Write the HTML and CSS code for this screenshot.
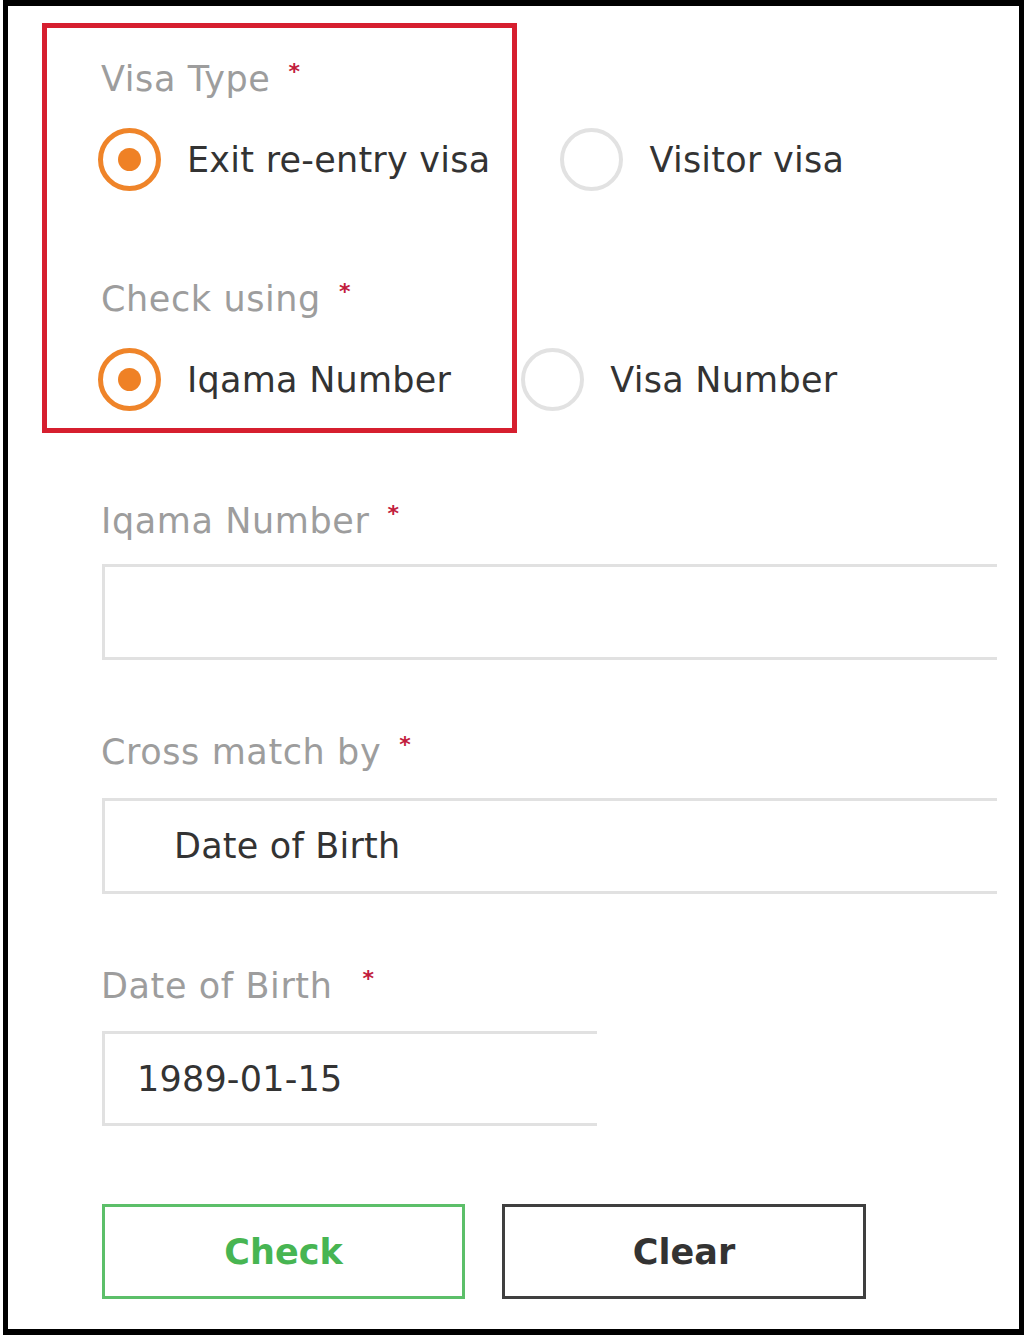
FILE: index.html
```html
<!DOCTYPE html>
<html lang="en">
<head>
<meta charset="utf-8">
<title>Visa Check</title>
<link rel="stylesheet" href="styles.css">
</head>
<body>
<div class="frame">
  <form class="form">
    <div class="field radio-field">
      <div class="label">Visa Type<span class="req">*</span></div>
      <div class="radio-group">
        <label class="option"><span class="radio checked"></span><span class="opt-text">Exit re-entry visa</span></label>
        <label class="option"><span class="radio"></span><span class="opt-text">Visitor visa</span></label>
      </div>
    </div>
    <div class="field radio-field">
      <div class="label">Check using<span class="req">*</span></div>
      <div class="radio-group">
        <label class="option"><span class="radio checked"></span><span class="opt-text">Iqama Number</span></label>
        <label class="option"><span class="radio"></span><span class="opt-text">Visa Number</span></label>
      </div>
    </div>
    <div class="field input-field">
      <div class="label">Iqama Number<span class="req">*</span></div>
      <div class="box wide"></div>
    </div>
    <div class="field input-field">
      <div class="label">Cross match by<span class="req">*</span></div>
      <div class="box wide select"><span class="value">Date of Birth</span></div>
    </div>
    <div class="field input-field">
      <div class="label">Date of Birth<span class="req far">*</span></div>
      <div class="box narrow"><span class="value">1989-01-15</span></div>
    </div>
    <div class="actions">
      <div class="btn btn-check">Check</div>
      <div class="btn btn-clear">Clear</div>
    </div>
  </form>
  <div class="highlight"></div>
</div>
</body>
</html>
```

FILE: styles.css
```css
html, body {
  margin: 0;
  padding: 0;
  background: #ffffff;
}

body {
  font-family: "DejaVu Sans", "Liberation Sans", Arial, sans-serif;
}

.frame {
  position: relative;
  box-sizing: border-box;
  width: 1021px;
  height: 1335px;
  margin-left: 3px;
  border-style: solid;
  border-color: #000000;
  border-width: 6px 5px 6px 5px;
  background: #ffffff;
  overflow: hidden;
}

.form {
  display: flex;
  flex-direction: column;
  padding: 53px 0 0 94px;
  margin: 0;
}

.label {
  font-size: 35px;
  line-height: 40px;
  height: 40px;
  color: #9d9d9d;
  margin-left: -1px;
  letter-spacing: 0.6px;
  white-space: nowrap;
}

.req {
  display: inline-block;
  color: #c21d3d;
  font-size: 22px;
  font-weight: bold;
  line-height: 22px;
  vertical-align: top;
  letter-spacing: 0;
  margin-left: 18px;
  margin-top: 2px;
}

.req.far {
  margin-left: 30px;
}

.radio-field {
  margin-bottom: 88px;
}

.radio-field + .radio-field {
  margin-bottom: 90px;
}

.input-field {
  margin-bottom: 72px;
}

.radio-group {
  display: flex;
  align-items: center;
  gap: 70px;
  margin-top: 29px;
  margin-left: -4px;
  height: 63px;
}

.option {
  display: flex;
  align-items: center;
  gap: 26px;
}

.radio {
  box-sizing: border-box;
  width: 63px;
  height: 63px;
  border-radius: 50%;
  border: 4px solid #e2e2e2;
  display: flex;
  align-items: center;
  justify-content: center;
  flex: none;
}

.radio.checked {
  border: 5px solid #ef8429;
}

.radio.checked::after {
  content: "";
  width: 23px;
  height: 23px;
  border-radius: 50%;
  background: #ef8125;
}

.opt-text {
  font-size: 35px;
  line-height: 40px;
  color: #333333;
  letter-spacing: 0.25px;
  white-space: nowrap;
}

.box {
  box-sizing: border-box;
  height: 96px;
  margin-top: 23px;
  border: 3px solid #e1e1e1;
  border-right: none;
  display: flex;
  align-items: center;
}

.box.wide {
  width: 895px;
}

.box.narrow {
  width: 495px;
  height: 95px;
  margin-top: 25px;
}

.select {
  margin-top: 26px;
}

.value {
  font-size: 35px;
  line-height: 40px;
  color: #333333;
  letter-spacing: 0.2px;
  white-space: nowrap;
}

.select .value {
  padding-left: 69px;
}

.narrow .value {
  padding-left: 32px;
}

.actions {
  display: flex;
  gap: 37px;
  margin-top: 6px;
}

.btn {
  box-sizing: border-box;
  width: 363px;
  height: 95px;
  display: flex;
  align-items: center;
  justify-content: center;
  font-size: 35px;
  font-weight: bold;
}

.btn-check {
  border: 3px solid #5cbf69;
  color: #47b552;
}

.btn-clear {
  width: 364px;
  border: 3px solid #3f3f3f;
  color: #333333;
}

.highlight {
  position: absolute;
  left: 34px;
  top: 17px;
  width: 475px;
  height: 410px;
  box-sizing: border-box;
  border: 5px solid #d61f2f;
  pointer-events: none;
}
```
